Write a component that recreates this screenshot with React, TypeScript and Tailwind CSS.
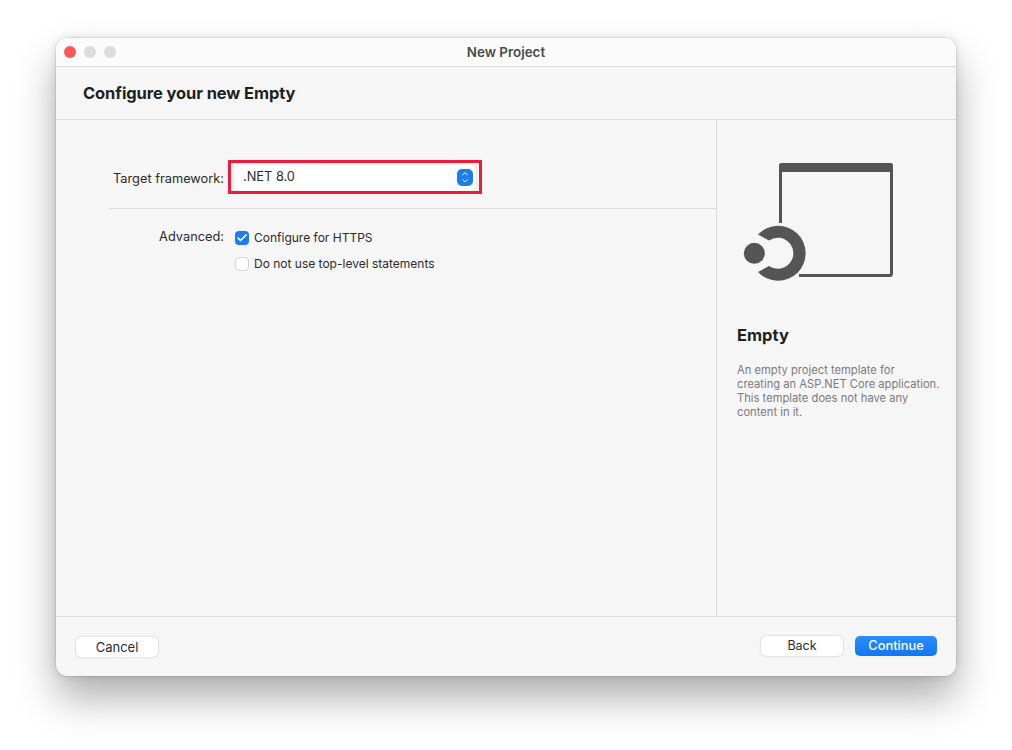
import { Check, ChevronDown, ChevronUp } from "lucide-react";

const FONT = "font-['Inter','Noto_Sans',sans-serif]";

function TrafficLight({ color }: { color: string }) {
  return <span className={`w-3 h-3 rounded-full ${color}`} />;
}

function EmptyIcon() {
  return (
    <svg width="152" height="124" viewBox="0 0 152 124" fill="none" className="block">
      <path d="M37.500 63V6h111v107.500a2 2 0 0 1-2 2H56" stroke="#555" strokeWidth="3" />
      <rect x="36" y="3" width="114" height="9" rx="2.500" fill="#555" />
      <circle cx="11.300" cy="93.300" r="10.500" fill="#555" />
      <path d="M15 74.500A27.500 27.500 0 1 1 15 112l11-6A15.500 15.500 0 1 0 26 80.500z" fill="#555" />
    </svg>
  );
}

export default function App() {
  return (
    <div className={`w-[1012px] h-[750px] bg-white pt-[38px] pl-[56px] overflow-hidden ${FONT}`}>
      <div className="w-[900px] h-[638px] flex flex-col rounded-[11px] overflow-hidden bg-[#f6f6f6] shadow-[0_22px_40px_rgba(0,0,0,0.32),0_0_8px_rgba(0,0,0,0.12),0_0_0_0.5px_rgba(0,0,0,0.12)]">
        {/* Title bar */}
        <div className="relative h-[29px] flex-none flex items-center justify-center bg-[#fbfbfb] border-b border-[#dcdcdc]">
          <div className="absolute left-[8px] top-[8px] flex gap-[8px]">
            <TrafficLight color="bg-[#fc5753]" />
            <TrafficLight color="bg-[#dcdcdc]" />
            <TrafficLight color="bg-[#dcdcdc]" />
          </div>
          <span className="text-[13.400px] font-semibold text-[#4a4a4a]">New Project</span>
        </div>

        {/* Header */}
        <div className="h-[53px] flex-none flex items-center pl-[27px] border-b border-[#dcdcdc]">
          <h1 className="text-[16.500px] font-bold text-[#1f1f1f] tracking-[-0.1px]">Configure your new Empty</h1>
        </div>

        {/* Body */}
        <div className="flex-1 flex min-h-0">
          <div className="w-[661px] flex-none border-r border-[#dcdcdc] pt-[40px]">
            <div className="ml-[53px] h-[49px] border-b border-[#dcdcdc] flex items-start">
              <label className="w-[115px] flex-none text-right text-[12.800px] text-[#2b2b2b] whitespace-nowrap mt-[9px]">
                Target framework:
              </label>
              <div className="ml-[4px] w-[254px] h-[34px] border-[3px] border-[#ee1c3c] flex items-center justify-center">
                <div className="w-[242px] h-[27px] bg-white rounded-[6px] shadow-[0_0_2px_rgba(0,0,0,0.2)] flex items-center justify-between pl-[9px] pr-[3px]">
                  <span className="text-[12.800px] text-[#2b2b2b] -mt-[1px]">.NET 8.0</span>
                  <span className="w-[16px] h-[17px] rounded-[5px] bg-[#1a7ef2] flex flex-col items-center justify-center text-white">
                    <ChevronUp size={10} strokeWidth={2.500} className="-mb-[1px]" />
                    <ChevronDown size={10} strokeWidth={2.500} className="-mt-[1px]" />
                  </span>
                </div>
              </div>
            </div>

            <div className="flex mt-[20px]">
              <div className="w-[168px] text-right text-[12.800px] text-[#2b2b2b] leading-[16px]">Advanced:</div>
              <div className="ml-[11px] flex flex-col gap-[11px] mt-[1px]">
                <div className="flex items-center gap-[5px] h-[15px]">
                  <span className="w-[14px] h-[14px] rounded-[4px] bg-[#1a7ef2] flex items-center justify-center text-white">
                    <Check size={12} strokeWidth={3.500} />
                  </span>
                  <span className="text-[12px] text-[#2b2b2b]">Configure for HTTPS</span>
                </div>
                <div className="flex items-center gap-[5px] h-[15px]">
                  <span className="w-[14px] h-[14px] rounded-[4px] bg-white border border-[#d4d4d4]" />
                  <span className="text-[12px] text-[#2b2b2b]">Do not use top-level statements</span>
                </div>
              </div>
            </div>
          </div>

          <div className="flex-1 pl-[20px]">
            <div className="mt-[40px] ml-[6px]">
              <EmptyIcon />
            </div>
            <h2 className="mt-[41px] text-[16.500px] font-bold text-[#1f1f1f] leading-[20px]">Empty</h2>
            <p className="mt-[18px] whitespace-nowrap text-[11.200px] leading-[14px] text-[#7b7b7b]">
              An empty project template for
              <br />
              creating an ASP.NET Core application.
              <br />
              This template does not have any
              <br />
              content in it.
            </p>
          </div>
        </div>

        {/* Footer */}
        <div className="h-[60px] flex-none border-t border-[#dcdcdc] flex items-start justify-between pl-[20px] pr-[19px] pt-[19px]">
          <button className="w-[82px] h-[20px] mt-[1px] rounded-[5px] bg-white shadow-[0_0_2px_rgba(0,0,0,0.25)] text-[13px] leading-[20px] text-[#2b2b2b]">
            Cancel
          </button>
          <div className="flex gap-[12px]">
            <button className="w-[82px] h-[20px] rounded-[5px] bg-white shadow-[0_0_2px_rgba(0,0,0,0.25)] text-[12.500px] leading-[20px] text-[#2b2b2b]">
              Back
            </button>
            <button className="w-[82px] h-[20px] rounded-[5px] bg-gradient-to-b from-[#2b8cfb] to-[#0f76f5] text-[12.800px] leading-[20px] font-medium text-white">
              Continue
            </button>
          </div>
        </div>
      </div>
    </div>
  );
}
